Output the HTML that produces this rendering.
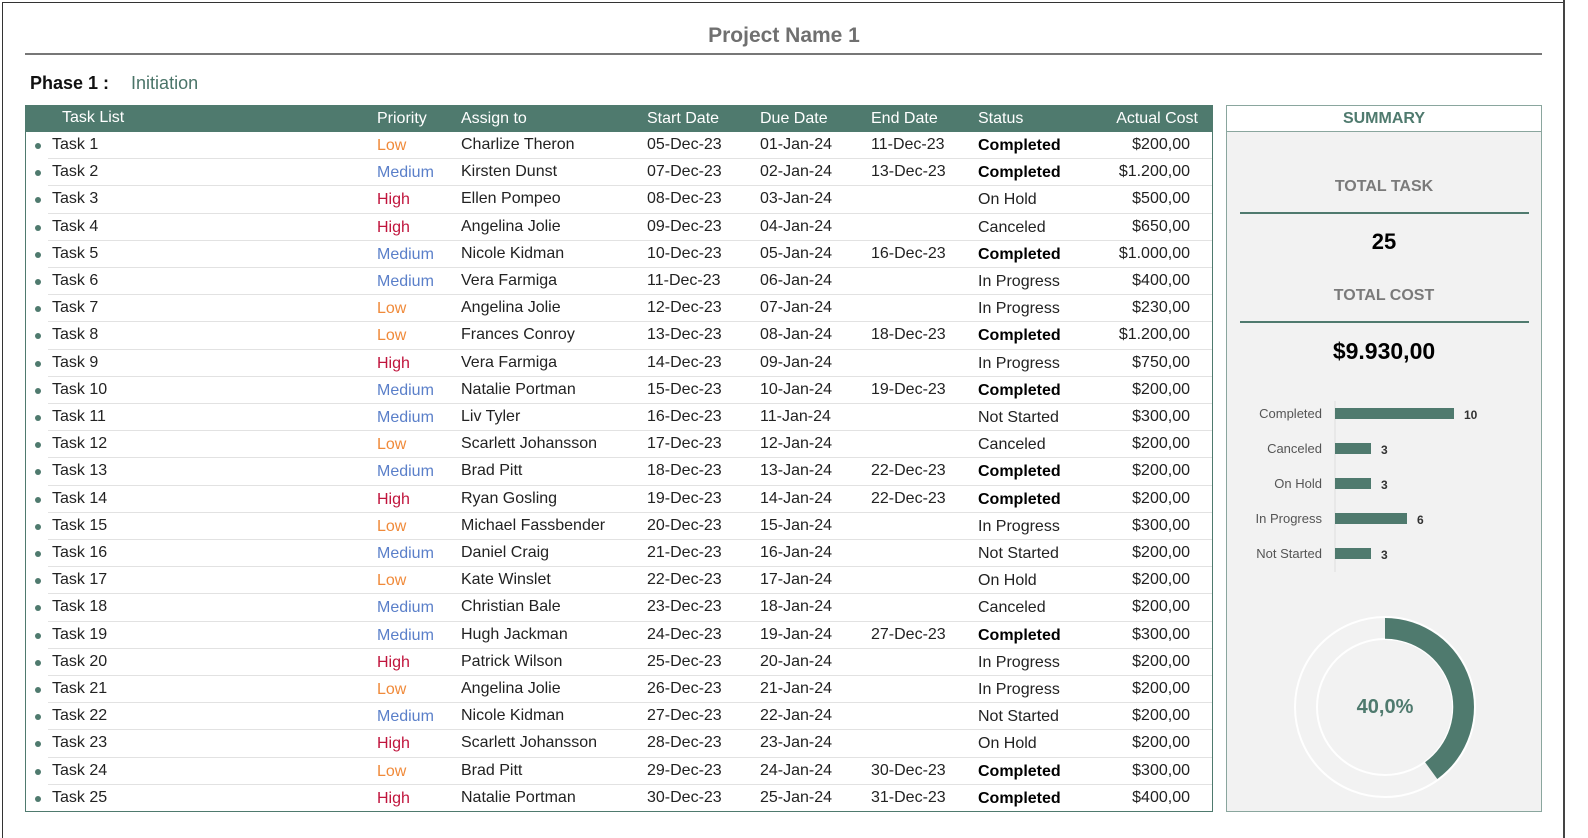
<!DOCTYPE html><html style="overflow:hidden"><head><style>
*{margin:0;padding:0;box-sizing:border-box}
body{width:1588px;height:838px;background:#fff;font-family:"Liberation Sans",sans-serif;position:relative;overflow:hidden;color:#222}
.frame{position:absolute;left:2px;top:2px;width:1562px;height:836px;border:1px solid #333;border-bottom:none}
.rb{position:absolute;left:1563px;top:0;width:2px;height:838px;background:#444}
.title{position:absolute;left:0;width:1568px;top:24px;text-align:center;font-size:21px;font-weight:bold;color:#707070}
.tline{position:absolute;left:25px;top:53px;width:1517px;height:2px;background:#777}
.phase{position:absolute;left:30px;top:73px;font-size:18px;font-weight:bold;color:#111}
.phase span{color:#4a7468;font-weight:normal;margin-left:22px}
.tbl{position:absolute;left:25px;top:105px;width:1188px;height:707px;border:1px solid #4f7a6e}
.hdr{position:absolute;left:0;top:0;width:100%;height:26px;background:#4f7a6e;color:#fff;font-size:16px}
.c{position:absolute;white-space:nowrap}
.row{position:absolute;left:0;width:100%;height:27.2px;font-size:16px}
.row .ln{position:absolute;left:22px;right:0;bottom:0;height:1px;background:#e2e2e2}
.dot{position:absolute;left:9px;top:11px;width:6px;height:6px;border-radius:50%;background:#4f7a6e}
.low{color:#f08a3a}.med{color:#5a7fc9}.high{color:#c0143c}
.b{font-weight:bold;color:#000}
.sum{position:absolute;left:1226px;top:105px;width:316px;height:707px;border:1.5px solid #8aa69e;background:#f2f2f2}
.sumh{height:26px;background:#fff;border-bottom:1.5px solid #8aa69e;text-align:center;font-weight:bold;color:#4f7a6e;font-size:16px;line-height:26px}
.lab{position:absolute;left:0;width:100%;text-align:center;font-weight:bold;color:#7a7a7a;font-size:16px}
.big{position:absolute;left:0;width:100%;text-align:center;font-weight:bold;color:#000}
.sl{position:absolute;left:13px;width:289px;height:2px;background:#4f7a6e}
</style></head><body>
<div class="frame"></div><div class="rb"></div>
<div class="title">Project Name 1</div>
<div class="tline"></div>
<div class="phase">Phase 1 :<span>Initiation</span></div>
<div class="tbl">
<div class="hdr">
<div class="c" style="left:36px;top:3px">Task List</div>
<div class="c" style="left:351px;top:4px">Priority</div>
<div class="c" style="left:435px;top:4px">Assign to</div>
<div class="c" style="left:621px;top:4px">Start Date</div>
<div class="c" style="left:734px;top:4px">Due Date</div>
<div class="c" style="left:845px;top:4px">End Date</div>
<div class="c" style="left:952px;top:4px">Status</div>
<div class="c" style="right:14px;top:4px">Actual Cost</div>
</div>
<div id="rows"></div>
</div>
<div class="sum">
<div class="sumh">SUMMARY</div>
<div class="lab" style="top:72px">TOTAL TASK</div>
<div class="sl" style="top:106px"></div>
<div class="big" style="top:123px;font-size:22px">25</div>
<div class="lab" style="top:181px">TOTAL COST</div>
<div class="sl" style="top:215px"></div>
<div class="big" style="top:232px;font-size:23px">$9.930,00</div>
<svg style="position:absolute;left:0;top:0" width="316" height="707" font-family="Liberation Sans" font-size="13">
<line x1="108" y1="295" x2="108" y2="466" stroke="#ddd"/>
<g fill="#4f7a6e">
<rect x="108" y="302" width="119" height="11"/><rect x="108" y="337" width="36" height="11"/><rect x="108" y="372" width="36" height="11"/><rect x="108" y="407" width="72" height="11"/><rect x="108" y="442" width="36" height="11"/></g>
<g fill="#555" text-anchor="end"><text x="95" y="312">Completed</text><text x="95" y="347">Canceled</text><text x="95" y="382">On Hold</text><text x="95" y="417">In Progress</text><text x="95" y="452">Not Started</text></g>
<g fill="#333" font-weight="bold" font-size="12"><text x="237" y="313">10</text><text x="154" y="348">3</text><text x="154" y="383">3</text><text x="190" y="418">6</text><text x="154" y="453">3</text></g>
<circle cx="158" cy="601" r="90" fill="none" stroke="#fff" stroke-width="2"/>
<circle cx="158" cy="601" r="68" fill="none" stroke="#fff" stroke-width="2"/>
<path d="M158 512 A89 89 0 0 1 210.3 673 L198.1 656.2 A68.2 68.2 0 0 0 158 532.8 Z" fill="#4f7a6e"/>
<text x="158" y="607" text-anchor="middle" font-size="20" font-weight="bold" fill="#4f7a6e">40,0%</text>
</svg>
</div>
<script>
var d=[["Low","Charlize Theron","05-Dec-23","01-Jan-24","11-Dec-23","Completed","$200,00"],
["Medium","Kirsten Dunst","07-Dec-23","02-Jan-24","13-Dec-23","Completed","$1.200,00"],
["High","Ellen Pompeo","08-Dec-23","03-Jan-24","","On Hold","$500,00"],
["High","Angelina Jolie","09-Dec-23","04-Jan-24","","Canceled","$650,00"],
["Medium","Nicole Kidman","10-Dec-23","05-Jan-24","16-Dec-23","Completed","$1.000,00"],
["Medium","Vera Farmiga","11-Dec-23","06-Jan-24","","In Progress","$400,00"],
["Low","Angelina Jolie","12-Dec-23","07-Jan-24","","In Progress","$230,00"],
["Low","Frances Conroy","13-Dec-23","08-Jan-24","18-Dec-23","Completed","$1.200,00"],
["High","Vera Farmiga","14-Dec-23","09-Jan-24","","In Progress","$750,00"],
["Medium","Natalie Portman","15-Dec-23","10-Jan-24","19-Dec-23","Completed","$200,00"],
["Medium","Liv Tyler","16-Dec-23","11-Jan-24","","Not Started","$300,00"],
["Low","Scarlett Johansson","17-Dec-23","12-Jan-24","","Canceled","$200,00"],
["Medium","Brad Pitt","18-Dec-23","13-Jan-24","22-Dec-23","Completed","$200,00"],
["High","Ryan Gosling","19-Dec-23","14-Jan-24","22-Dec-23","Completed","$200,00"],
["Low","Michael Fassbender","20-Dec-23","15-Jan-24","","In Progress","$300,00"],
["Medium","Daniel Craig","21-Dec-23","16-Jan-24","","Not Started","$200,00"],
["Low","Kate Winslet","22-Dec-23","17-Jan-24","","On Hold","$200,00"],
["Medium","Christian Bale","23-Dec-23","18-Jan-24","","Canceled","$200,00"],
["Medium","Hugh Jackman","24-Dec-23","19-Jan-24","27-Dec-23","Completed","$300,00"],
["High","Patrick Wilson","25-Dec-23","20-Jan-24","","In Progress","$200,00"],
["Low","Angelina Jolie","26-Dec-23","21-Jan-24","","In Progress","$200,00"],
["Medium","Nicole Kidman","27-Dec-23","22-Jan-24","","Not Started","$200,00"],
["High","Scarlett Johansson","28-Dec-23","23-Jan-24","","On Hold","$200,00"],
["Low","Brad Pitt","29-Dec-23","24-Jan-24","30-Dec-23","Completed","$300,00"],
["High","Natalie Portman","30-Dec-23","25-Jan-24","31-Dec-23","Completed","$400,00"]];
var h="";var cl={Low:"low",Medium:"med",High:"high"};
d.forEach(function(r,i){var t=26+i*27.2;
h+='<div class="row" style="top:'+t+'px"><div class="dot"></div><div class="c" style="left:26px;top:4px">Task '+(i+1)+'</div>'+
'<div class="c '+cl[r[0]]+'" style="left:351px;top:5px">'+r[0]+'</div>'+
'<div class="c" style="left:435px;top:4px">'+r[1]+'</div>'+
'<div class="c" style="left:621px;top:4px">'+r[2]+'</div>'+
'<div class="c" style="left:734px;top:4px">'+r[3]+'</div>'+
'<div class="c" style="left:845px;top:4px">'+r[4]+'</div>'+
'<div class="c'+(r[5]=="Completed"?" b":"")+'" style="left:952px;top:5px">'+r[5]+'</div>'+
'<div class="c" style="right:22px;top:4px">'+r[6]+'</div>'+(i<24?'<div class="ln"></div>':'')+'</div>';});
document.getElementById("rows").innerHTML=h;
</script>
</body></html>
